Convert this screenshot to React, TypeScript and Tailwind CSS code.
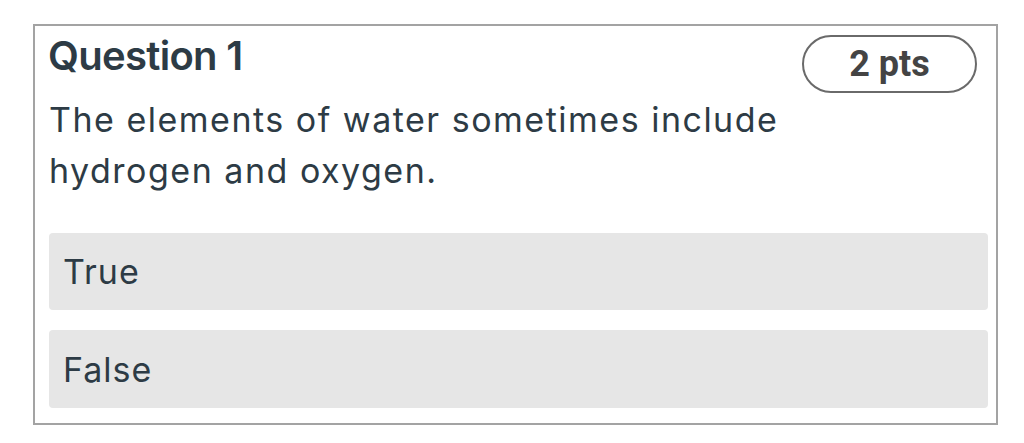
import React from "react";

export default function App() {
  return (
    <div className="w-[1024px] h-[443px] bg-white relative" style={{ fontFamily: "Inter, 'Noto Sans', sans-serif" }}>
      <div className="pt-[24px] pl-[33px]">
        <div className="w-[965px] h-[401px] border-2 border-[#a3a3a3] pl-[14px] pr-[8px] text-[#2d3b45]">
          <div className="flex justify-between items-start">
            <div className="pt-[10px] -ml-[1px] text-[40px] leading-[40px] font-semibold tracking-[-0.7px]">Question 1</div>
            <div className="mt-[9px] mr-[11px] w-[175px] h-[58px] rounded-full border-2 border-[#6a6a6a] flex items-center justify-center text-[#444444] text-[36px] font-bold" style={{ fontFamily: "Roboto, 'Liberation Sans', sans-serif" }}>
              2 pts
            </div>
          </div>
          <p className="mt-[1px] text-[34px] leading-[51px] tracking-[1.5px] w-[800px]">
            The elements of water sometimes include hydrogen and oxygen.
          </p>
          <div className="mt-[37px] flex flex-col gap-[20px]">
            <div className="h-[77px] rounded-[4px] bg-[#e6e6e6] pl-[14px] flex items-center text-[34px] tracking-[1px]">True</div>
            <div className="h-[78px] rounded-[4px] bg-[#e6e6e6] pl-[14px] flex items-center text-[34px] tracking-[1px]">False</div>
          </div>
        </div>
      </div>
    </div>
  );
}
